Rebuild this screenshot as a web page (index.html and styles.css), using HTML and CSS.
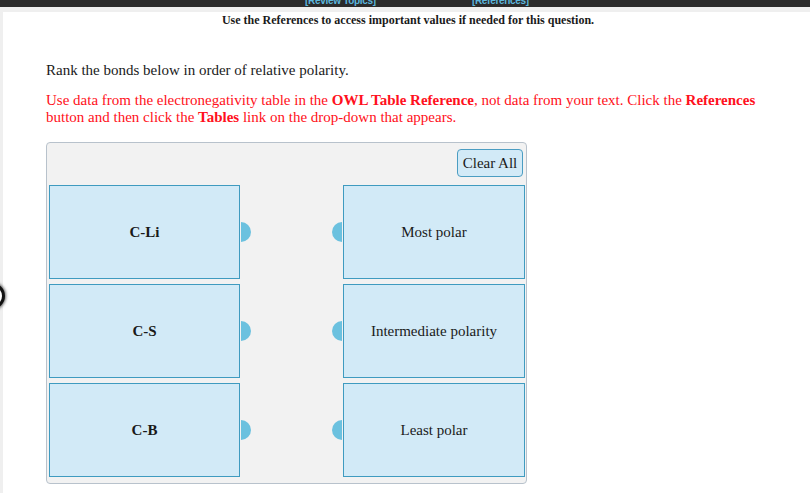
FILE: index.html
```html
<!DOCTYPE html>
<html>
<head>
<meta charset="utf-8">
<link rel="stylesheet" href="styles.css">
</head>
<body>
<div class="topbar">
  <span class="toplink">[Review Topics]</span>
  <span class="toplink second">[References]</span>
</div>
<div class="page">
  <div class="notice">Use the References to access important values if needed for this question.</div>
  <div class="content">
    <p class="prompt">Rank the bonds below in order of relative polarity.</p>
    <p class="hint">Use data from the electronegativity table in the <b>OWL Table Reference</b>, not data from your text. Click the <b>References</b> button and then click the <b>Tables</b> link on the drop-down that appears.</p>
    <div class="panel">
      <div class="toolbar"><button class="clear">Clear All</button></div>
      <div class="row">
        <div class="card item">C-Li</div>
        <span class="knob knob-r"></span>
        <span class="spacer"></span>
        <span class="knob knob-l"></span>
        <div class="card target">Most polar</div>
      </div>
      <div class="row">
        <div class="card item">C-S</div>
        <span class="knob knob-r"></span>
        <span class="spacer"></span>
        <span class="knob knob-l"></span>
        <div class="card target">Intermediate polarity</div>
      </div>
      <div class="row">
        <div class="card item">C-B</div>
        <span class="knob knob-r"></span>
        <span class="spacer"></span>
        <span class="knob knob-l"></span>
        <div class="card target">Least polar</div>
      </div>
    </div>
  </div>
</div>
<div class="ring"></div>
</body>
</html>
```
FILE: styles.css
```css
html, body {
  margin: 0;
  padding: 0;
}
body {
  background: #efefef;
  font-family: "Liberation Serif", "Times New Roman", serif;
  color: #1a1a1a;
  height: 493px;
  overflow: hidden;
  position: relative;
}
.topbar {
  height: 7px;
  background: #2b2b2b;
  overflow: hidden;
  display: flex;
  padding-left: 305px;
}
.toplink {
  font-family: "Liberation Sans", Arial, sans-serif;
  font-weight: bold;
  font-size: 10px;
  line-height: 10px;
  margin-top: -4px;
  color: #5bb6dd;
  letter-spacing: -0.3px;
}
.toplink.second {
  margin-left: 96px;
}
.page {
  margin: 5px 0 0 3px;
  background: #ffffff;
  height: 481px;
}
.notice {
  text-align: center;
  font-weight: bold;
  font-size: 12px;
  line-height: 16px;
  padding-left: 3px;
}
.content {
  padding-left: 43px;
}
.prompt {
  margin: 33px 0 0 0;
  font-size: 15px;
  line-height: 18px;
}
.hint {
  margin: 13px 0 0 0;
  font-size: 15px;
  line-height: 17px;
  color: #ff1020;
  width: 720px;
}
.panel {
  margin-top: 16px;
  width: 476px;
  height: 340px;
  border: 1px solid #b8c2cc;
  border-radius: 4px;
  background: #f2f2f2;
  padding: 0 1px 0 2px;
}
.toolbar {
  display: flex;
  justify-content: flex-end;
  padding: 6px 2px 0 0;
  height: 42px;
  box-sizing: border-box;
}
.clear {
  font-family: "Liberation Serif", "Times New Roman", serif;
  font-size: 15px;
  color: #1a1a1a;
  background: #d2eaf7;
  border: 1px solid #4b9dc2;
  border-radius: 4px;
  width: 66px;
  height: 28px;
  padding: 0;
}
.row {
  display: flex;
  align-items: center;
  height: 94px;
  margin-bottom: 5px;
}
.card {
  height: 94px;
  box-sizing: border-box;
  background: #d2eaf7;
  border: 1px solid #3f9bc0;
  display: flex;
  align-items: center;
  justify-content: center;
  font-size: 15px;
}
.item {
  width: 191px;
  font-weight: bold;
}
.target {
  width: 182px;
}
.spacer {
  flex: 1;
}
.knob {
  width: 10px;
  height: 20px;
  background: #6bc1df;
}
.knob-r {
  margin-left: 1px;
  border-radius: 0 10px 10px 0;
}
.knob-l {
  margin-right: 1px;
  border-radius: 10px 0 0 10px;
}
.ring {
  position: absolute;
  left: -21px;
  top: 283px;
  width: 20px;
  height: 20px;
  border: 3px solid #111;
  border-radius: 50%;
  background: #fff;
  box-shadow: 0 0 3px 1px rgba(0,0,0,0.6);
}
```
